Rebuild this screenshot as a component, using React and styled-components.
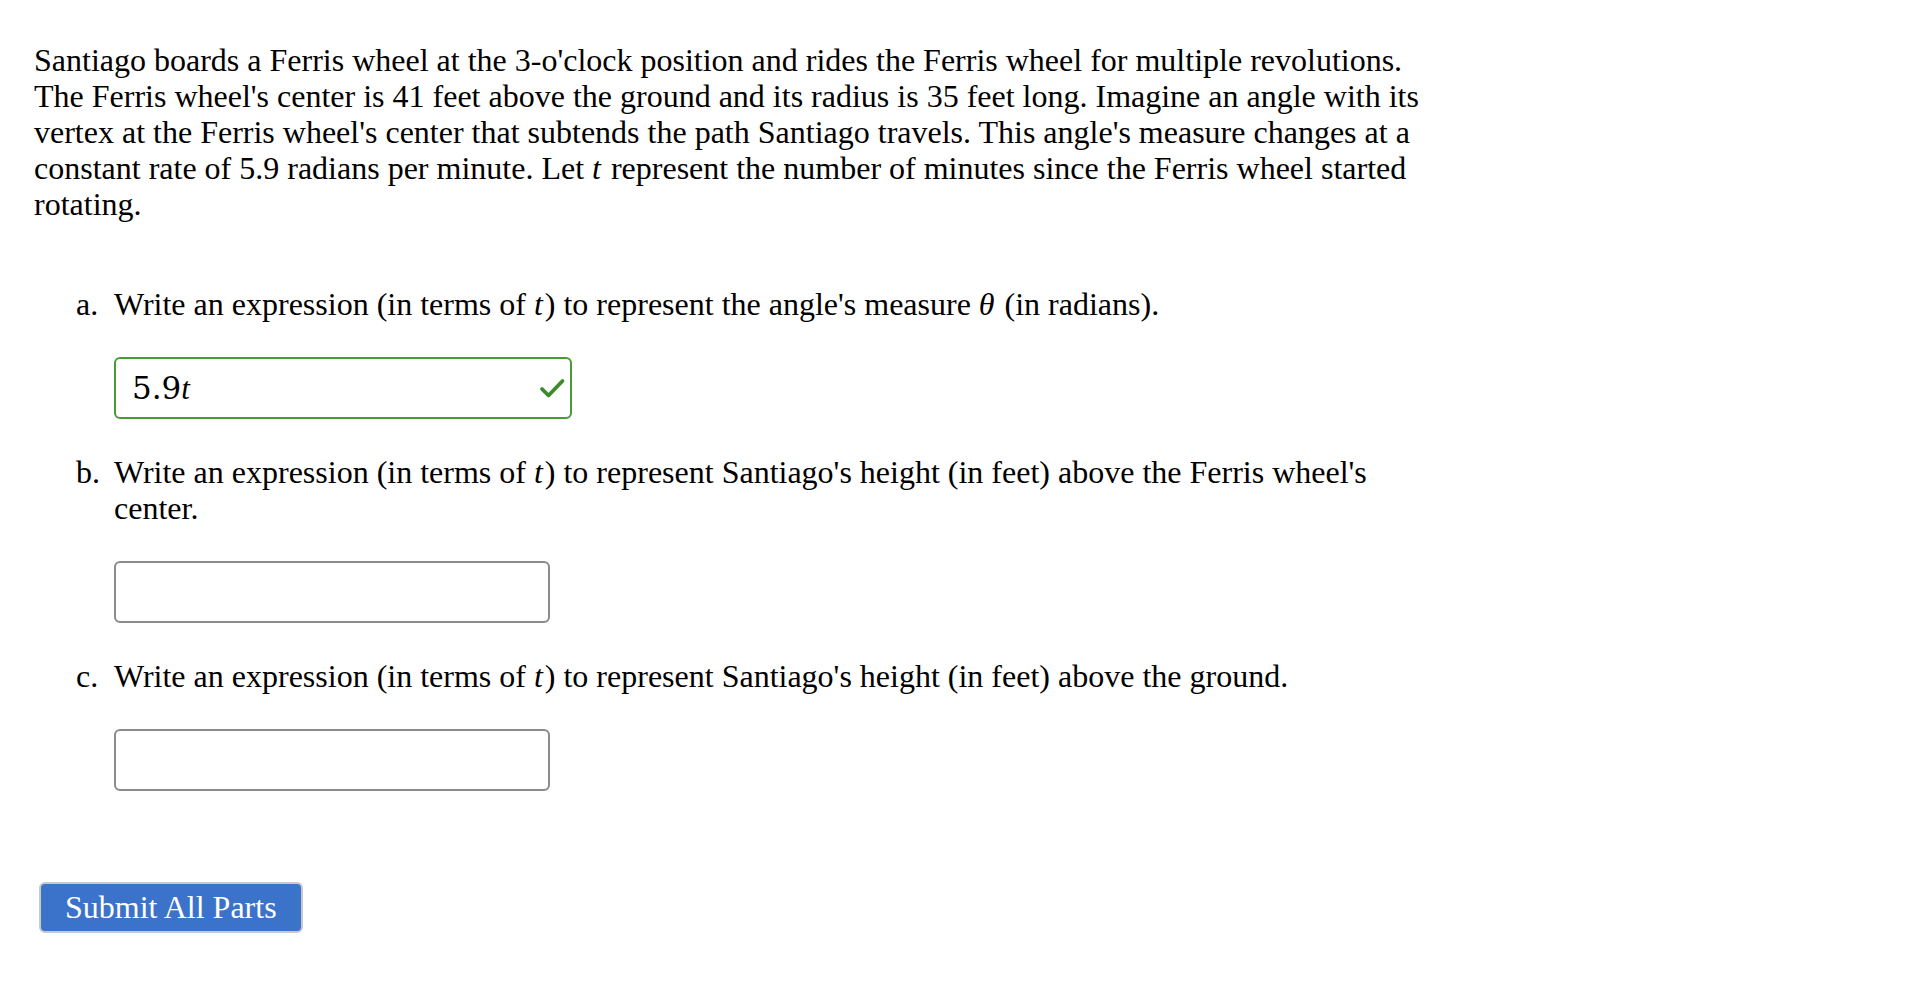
import styled, { createGlobalStyle } from 'styled-components'

const GlobalStyle = createGlobalStyle`
  html, body {
    margin: 0;
    padding: 0;
    background: #fff;
  }
  body {
    font-family: "Liberation Serif", "Times New Roman", serif;
    color: #000;
  }
`

const Page = styled.div`
  padding: 42px 34px 40px;
  width: 1400px;
  font-size: 32px;
  line-height: 36px;
`

const Intro = styled.p`
  margin: 0 0 64px;
`

const MathVar = styled.i`
  font-family: "Liberation Serif", serif;
  font-style: italic;
  margin-right: 2px;
`

const Parts = styled.ol`
  list-style: none;
  margin: 0;
  padding: 0 0 0 42px;
  display: flex;
  flex-direction: column;
  gap: 35px;
`

const Part = styled.li`
  display: grid;
  grid-template-columns: 38px 1fr;
  row-gap: 35px;
`

const Label = styled.span``

const Question = styled.div``

const AnswerBox = styled.div`
  grid-column: 2;
  box-sizing: border-box;
  width: ${({ wide }) => (wide ? '458px' : '436px')};
  height: 62px;
  border: 2px solid ${({ correct }) => (correct ? '#4a9a36' : '#8a8a8a')};
  border-radius: 6px;
  display: flex;
  align-items: center;
  justify-content: space-between;
  padding: 0 4px 0 16px;
  background: #fff;
`

const AnswerText = styled.span`
  font-family: "DejaVu Serif", "Liberation Serif", serif;
  font-size: 31px;
`

const Submit = styled.button`
  margin-top: 91px;
  margin-left: 5px;
  font-family: "Liberation Serif", "Times New Roman", serif;
  font-size: 32px;
  color: #fff;
  background: #3a73c9;
  border: 2px solid #c9c9c9;
  border-radius: 6px;
  height: 51px;
  padding: 0 24px;
  cursor: pointer;
`

const Check = () => (
  <svg width="28" height="24" viewBox="0 0 28 24" fill="none">
    <path d="M4 13 L10.5 19.5 L24.5 5" stroke="#3d8b2c" strokeWidth="3.8" strokeLinecap="round" strokeLinejoin="round" />
  </svg>
)

export default function App() {
  return (
    <Page>
      <GlobalStyle />
      <Intro>
        Santiago boards a Ferris wheel at the 3-o'clock position and rides the Ferris wheel for multiple revolutions.
        The Ferris wheel's center is 41 feet above the ground and its radius is 35 feet long. Imagine an angle with its
        vertex at the Ferris wheel's center that subtends the path Santiago travels. This angle's measure changes at a
        constant rate of 5.9 radians per minute. Let <MathVar>t</MathVar> represent the number of minutes since the Ferris wheel started
        rotating.
      </Intro>
      <Parts>
        <Part>
          <Label>a.</Label>
          <Question>
            Write an expression (in terms of <MathVar>t</MathVar>) to represent the angle's measure <MathVar>θ</MathVar> (in radians).
          </Question>
          <AnswerBox wide correct>
            <AnswerText>5.9<MathVar>t</MathVar></AnswerText>
            <Check />
          </AnswerBox>
        </Part>
        <Part>
          <Label>b.</Label>
          <Question>
            Write an expression (in terms of <MathVar>t</MathVar>) to represent Santiago's height (in feet) above the Ferris wheel's center.
          </Question>
          <AnswerBox />
        </Part>
        <Part>
          <Label>c.</Label>
          <Question>
            Write an expression (in terms of <MathVar>t</MathVar>) to represent Santiago's height (in feet) above the ground.
          </Question>
          <AnswerBox />
        </Part>
      </Parts>
      <Submit>Submit All Parts</Submit>
    </Page>
  )
}
